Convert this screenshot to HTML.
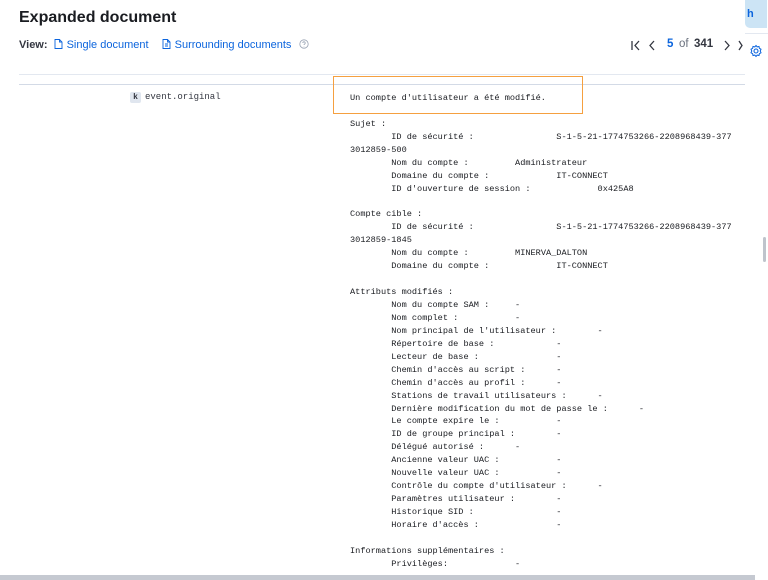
<!DOCTYPE html>
<html><head><meta charset="utf-8">
<style>
html,body{margin:0;padding:0;width:768px;height:580px;overflow:hidden;background:#fff;font-family:"Liberation Sans",sans-serif;}
.abs{position:absolute;}
h1{position:absolute;left:19px;top:9px;margin:0;font-size:16px;font-weight:700;color:#1a1c21;}
.view{position:absolute;left:19px;top:39px;font-size:11px;color:#343741;white-space:nowrap;}
.view b{color:#343741;}
.lnk{color:#0b64dd;margin-left:4px;}
.pg{position:absolute;top:38px;font-size:11.5px;color:#69707d;}
pre{position:absolute;left:350px;top:92px;margin:0;font-family:"Liberation Mono",monospace;font-size:8.6px;line-height:12.94px;color:#1a1c21;tab-size:8;-moz-tab-size:8;}
</style></head><body>
<h1>Expanded document</h1>
<div class="view"><b>View:</b>
 <svg width="9" height="10" style="margin-left:3px;vertical-align:-1px" viewBox="0 0 9 10"><path d="M1 .5h4.5L8 3v6.5H1z M5.5 .5V3H8" fill="none" stroke="#0b64dd" stroke-width="0.9"/></svg><span class="lnk">Single document</span>
 <svg width="9" height="10" style="margin-left:10px;vertical-align:-1px" viewBox="0 0 9 10"><path d="M1 .5h4.5L8 3v6.5H1z M5.5 .5V3H8 M3 5h3M3 7h3" fill="none" stroke="#0b64dd" stroke-width="0.9"/></svg><span class="lnk">Surrounding documents</span>
 <svg width="10" height="10" style="margin-left:5px;vertical-align:-1px" viewBox="0 0 10 10"><circle cx="5" cy="5" r="4.2" fill="none" stroke="#98a2b3" stroke-width="0.8"/><path d="M3.8 4a1.2 1.2 0 1 1 1.7 1.1c-.4.2-.5.5-.5.9M5 7.3v.3" fill="none" stroke="#98a2b3" stroke-width="0.8"/></svg>
</div>
<svg class="abs" style="left:630px;top:40px" width="12" height="11" viewBox="0 0 12 11"><path d="M2 1v9M9 1L5 5.5 9 10" fill="none" stroke="#343741" stroke-width="1.3"/></svg>
<svg class="abs" style="left:648px;top:40px" width="8" height="11" viewBox="0 0 8 11"><path d="M6 1L2 5.5 6 10" fill="none" stroke="#343741" stroke-width="1.3"/></svg>
<div class="pg" style="left:667px;color:#0b64dd;font-weight:700">5</div>
<div class="pg" style="left:679px">of</div>
<div class="pg" style="left:694px;color:#343741;font-weight:700">341</div>
<svg class="abs" style="left:723px;top:40px" width="8" height="11" viewBox="0 0 8 11"><path d="M2 1l4 4.5L2 10" fill="none" stroke="#343741" stroke-width="1.3"/></svg>
<svg class="abs" style="left:738px;top:40px" width="5" height="11" viewBox="0 0 5 11"><path d="M1 1l3 4.5L1 10" fill="none" stroke="#343741" stroke-width="1.3"/></svg>
<div class="abs" style="left:745px;top:0;width:20px;height:28px;background:#cce4f5;border-radius:0 0 0 5px;color:#0b64dd;font-size:11px;font-weight:700;line-height:28px;padding-left:2px">h</div>
<div class="abs" style="left:745px;top:33px;width:23px;height:1px;background:#e3e8f0"></div>
<svg class="abs" style="left:749px;top:44px" width="14" height="14" viewBox="0 0 14 14"><circle cx="7" cy="7" r="2" fill="none" stroke="#0b64dd" stroke-width="1.1"/><path d="M7 1.5l1.2 1.4 1.8-.4.4 1.8 1.6.9-.8 1.8.8 1.8-1.6.9-.4 1.8-1.8-.4L7 12.5l-1.2-1.4-1.8.4-.4-1.8-1.6-.9.8-1.8-.8-1.8 1.6-.9.4-1.8 1.8.4z" fill="none" stroke="#0b64dd" stroke-width="1"/></svg>
<div class="abs" style="left:19px;top:74px;width:726px;height:1px;background:#e3e8f0"></div>
<div class="abs" style="left:19px;top:84px;width:726px;height:1px;background:#d3dae6"></div>
<div class="abs" style="left:763px;top:237px;width:3px;height:25px;background:#bfc4cc;border-radius:2px"></div>
<div class="abs" style="left:0;top:575px;width:755px;height:5px;background:#c5c9d1"></div>
<div class="abs" style="left:130px;top:92px;width:11px;height:11px;background:#e0e6ef;border-radius:2px;font-family:'Liberation Mono',monospace;font-size:8px;line-height:11px;text-align:center;color:#343741;font-weight:700">k</div>
<div class="abs" style="left:145px;top:92px;font-family:'Liberation Mono',monospace;font-size:9px;color:#343741">event.original</div>
<div class="abs" style="left:333px;top:76px;width:248px;height:36px;border:1.5px solid #f5a040;"></div>
<pre>Un compte d'utilisateur a été modifié.

Sujet :
	ID de sécurité :		S-1-5-21-1774753266-2208968439-377
3012859-500
	Nom du compte :		Administrateur
	Domaine du compte :		IT-CONNECT
	ID d'ouverture de session :		0x425A8

Compte cible :
	ID de sécurité :		S-1-5-21-1774753266-2208968439-377
3012859-1845
	Nom du compte :		MINERVA_DALTON
	Domaine du compte :		IT-CONNECT

Attributs modifiés :
	Nom du compte SAM :	-
	Nom complet :		-
	Nom principal de l'utilisateur :	-
	Répertoire de base :		-
	Lecteur de base :		-
	Chemin d'accès au script :	-
	Chemin d'accès au profil :	-
	Stations de travail utilisateurs :	-
	Dernière modification du mot de passe le :	-
	Le compte expire le :		-
	ID de groupe principal :	-
	Délégué autorisé :	-
	Ancienne valeur UAC :		-
	Nouvelle valeur UAC :		-
	Contrôle du compte d'utilisateur :	-
	Paramètres utilisateur :	-
	Historique SID :		-
	Horaire d'accès :		-

Informations supplémentaires :
	Privilèges:		-</pre>
</body></html>
